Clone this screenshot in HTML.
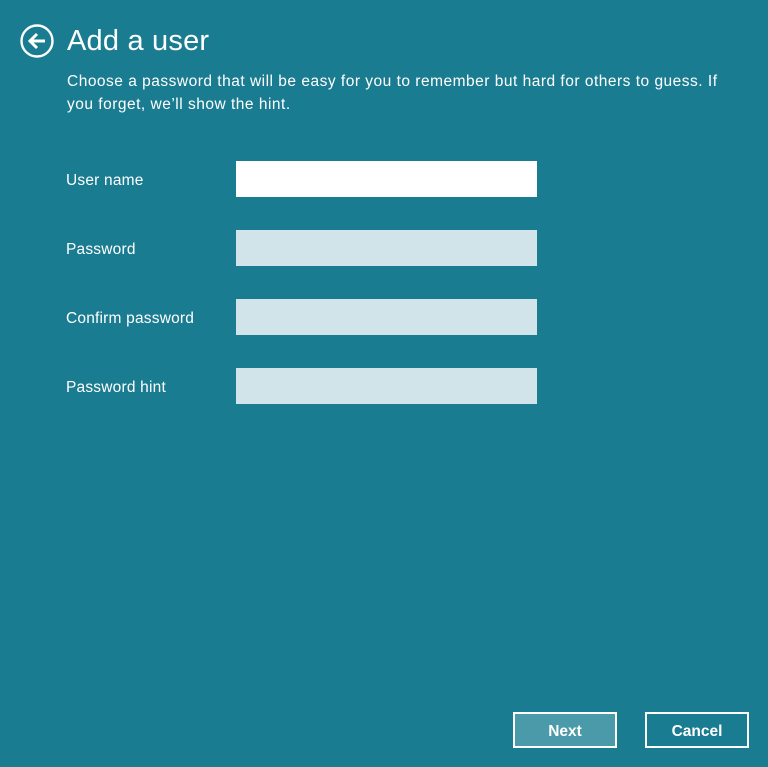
<!DOCTYPE html>
<html><head><style>
body{margin:0;width:768px;height:767px;background:#1a7c91;font-family:"Liberation Sans",sans-serif;color:#fff;position:relative;overflow:hidden}
.a{position:absolute}
.t{left:67px;top:25px;font-size:29px;font-weight:300;letter-spacing:0.2px}
.d{left:67px;top:70px;font-size:15.5px;line-height:23px;width:690px;white-space:nowrap;letter-spacing:0.5px}
.l{left:66px;font-size:15.5px;letter-spacing:0.2px}
.i{left:236px;width:301px;height:36px;background:#d1e4e9}
.b{top:712px;width:100px;height:32px;border:2px solid #fff;font-size:15.5px;font-weight:bold;text-align:center;line-height:35px}
</style></head><body>
<svg class="a" style="left:19px;top:23px" width="36" height="36" viewBox="0 0 36 36"><circle cx="18" cy="18" r="15.5" fill="none" stroke="#fff" stroke-width="2.4"/><path d="M26 18H12M18 11l-7 7 7 7" fill="none" stroke="#fff" stroke-width="3"/></svg>
<div class="a t">Add a user</div>
<div class="a d">Choose a password that will be easy for you to remember but hard for others to guess. If<br>you forget, we’ll show the hint.</div>
<div class="a l" style="top:172px">User name</div>
<div class="a l" style="top:241px">Password</div>
<div class="a l" style="top:310px">Confirm password</div>
<div class="a l" style="top:379px">Password hint</div>
<div class="a i" style="top:161px;background:#fff"></div>
<div class="a i" style="top:230px"></div>
<div class="a i" style="top:299px"></div>
<div class="a i" style="top:368px"></div>
<div class="a b" style="left:513px;background:#4a9aaa">Next</div>
<div class="a b" style="left:645px">Cancel</div>
</body></html>
